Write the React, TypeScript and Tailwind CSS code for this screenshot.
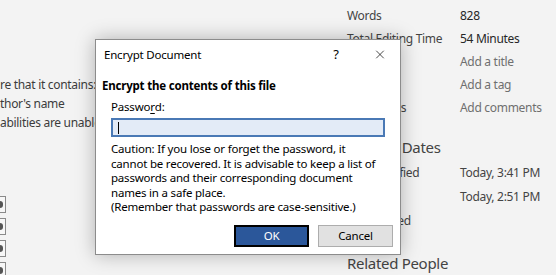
import { X } from "lucide-react";

const font = { fontFamily: '"Noto Sans", "Open Sans", Arial, sans-serif' };

function PropRow({ label, value, muted }: { label: string; value?: string; muted?: boolean }) {
    return (
        <div className="flex h-[23px] items-center">
            <div className="w-[113px] shrink-0 text-[#444]">{label}</div>
            <div className={muted ? "text-[#6f6f6f]" : "text-[#262626]"}>{value}</div>
        </div>
    );
}

function DateRow({ label, value }: { label: string; value?: string }) {
    return (
        <div className="flex h-[24px] items-center">
            <div className="w-[113px] shrink-0 text-[#444]">{label}</div>
            <div className="text-[#444]">{value}</div>
        </div>
    );
}

function SideBox() {
    return (
        <div className="flex h-[17px] w-[6px] items-center border border-l-0 border-[#8a8a8a] bg-[#f7f7f7]">
            <div className="h-[7px] w-[3px] rounded-r-full bg-[#555]" />
        </div>
    );
}

export default function App() {
    return (
        <div
            className="relative h-[275px] w-[556px] overflow-hidden bg-[#f3f3f3] text-[12px] leading-none tracking-[-0.3px]"
            style={font}
        >
            <div className="flex h-full">
                {/* inspect document text, scrolled off to the left */}
                <div className="w-[347px] shrink-0 pt-[76px] text-[#3c3c3c]">
                    <div className="flex h-[18px] items-center whitespace-nowrap">re that it contains:</div>
                    <div className="flex h-[19px] items-center whitespace-nowrap">thor's name</div>
                    <div className="flex h-[19px] items-center whitespace-nowrap">abilities are unable to read</div>
                    <div className="mt-[64px] flex flex-col gap-[5px]">
                        <SideBox />
                        <SideBox />
                        <SideBox />
                        <SideBox />
                    </div>
                </div>

                {/* properties panel */}
                <div className="flex-1 pt-[4px] whitespace-nowrap">
                    <PropRow label="Words" value="828" />
                    <PropRow label="Total Editing Time" value="54 Minutes" />
                    <PropRow label="Title" value="Add a title" muted />
                    <PropRow label="Tags" value="Add a tag" muted />
                    <PropRow label="Comments" value="Add comments" muted />

                    <div className="mt-[16px] flex h-[24px] items-center text-[15px] text-[#444]">Related Dates</div>
                    <div className="mt-[2px]">
                        <DateRow label="Last Modified" value="Today, 3:41 PM" />
                        <DateRow label="Created" value="Today, 2:51 PM" />
                        <DateRow label="Last Printed" />
                    </div>
                    <div className="mt-[18px] flex h-[24px] items-center text-[15px] text-[#444]">Related People</div>
                </div>
            </div>

            {/* Encrypt Document dialog */}
            <div className="absolute left-[95px] top-[39px] flex h-[216px] w-[306px] flex-col border border-[#8c8c8c] bg-white text-[11.5px] tracking-[-0.2px] text-black shadow-[0_0_18px_rgba(0,0,0,0.28)]">
                <div className="flex h-[29px] shrink-0 items-center pl-[8px]">
                    <span className="flex-1">Encrypt Document</span>
                    <span className="w-[14px] text-center text-[13px]">?</span>
                    <span className="ml-[30px] mr-[13px] flex w-[14px] justify-center">
                        <X size={15} strokeWidth={1.2} />
                    </span>
                </div>
                <div className="flex flex-1 flex-col pl-[6px] pr-[6px]">
                    <div className="mt-[9px] flex h-[16px] items-center font-bold">Encrypt the contents of this file</div>
                    <div className="mt-[5px] flex h-[16px] items-center pl-[9px]">
                        Passwo<span className="underline underline-offset-2">r</span>d:
                    </div>
                    <div className="ml-[9px] mt-[3px] flex h-[19px] w-[274px] items-center border-2 border-[#4a79b5] bg-[#e3ebf7] pl-[5px]">
                        <div className="h-[12px] w-px bg-black" />
                    </div>
                    <div className="mt-[5px] whitespace-nowrap pl-[9px] leading-[14.5px]">
                        <div>Caution: If you lose or forget the password, it</div>
                        <div>cannot be recovered. It is advisable to keep a list of</div>
                        <div>passwords and their corresponding document</div>
                        <div>names in a safe place.</div>
                        <div>(Remember that passwords are case-sensitive.)</div>
                    </div>
                    <div className="mt-[10px] flex justify-end gap-[9px] pr-px">
                        <button className="flex h-[22px] w-[75px] items-center justify-center border-2 border-black bg-[#2b579a] text-white">
                            OK
                        </button>
                        <button className="flex h-[22px] w-[75px] items-center justify-center border border-[#adadad] bg-[#e1e1e1] text-black">
                            Cancel
                        </button>
                    </div>
                </div>
            </div>
        </div>
    );
}
